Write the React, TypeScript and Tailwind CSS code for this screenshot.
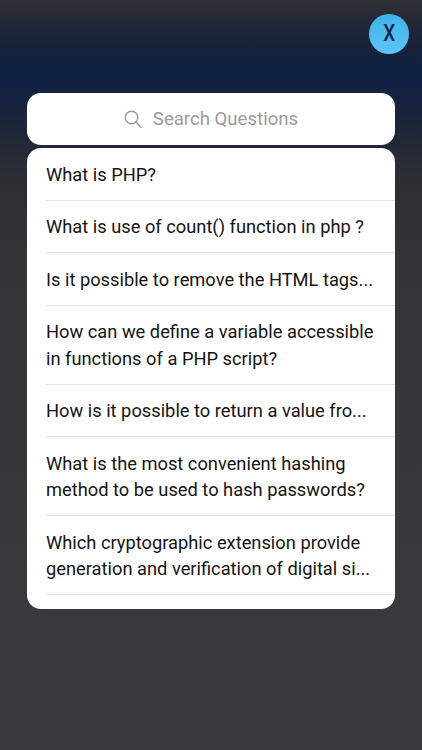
const rows = [
  { text: "What is PHP?" },
  { text: "What is use of count() function in php ?" },
  { text: "Is it possible to remove the HTML tags..." },
  { text: "How can we define a variable accessible\nin functions of a PHP script?" },
  { text: "How is it possible to return a value fro..." },
  { text: "What is the most convenient hashing\nmethod to be used to hash passwords?" },
  { text: "Which cryptographic extension provide\ngeneration and verification of digital si..." },
];

export default function App() {
  return (
    <div
      className="flex h-[750px] w-[422px] flex-col overflow-hidden bg-[linear-gradient(180deg,#2f3034_0px,#1b2438_35px,#0e2043_75px,#182439_115px,#2c2e33_175px,#333436_260px,#37383a_500px,#3a3b3f_750px)] font-['Roboto',sans-serif]"
    >
      <div className="flex justify-end pt-[14px] pr-[13px]">
        <div className="flex h-10 w-10 items-center justify-center rounded-full bg-[linear-gradient(180deg,#3fb4ea,#5cc4f6)] text-[#0f2a48]">
          <span className="scale-x-[0.82] text-[23px] font-medium">X</span>
        </div>
      </div>
      <div className="mt-[39px] flex flex-col gap-[3px] px-[27px]">
        <div className="flex h-[52px] items-center justify-center gap-[11px] rounded-[14px] bg-white">
          <svg width="18" height="18" viewBox="0 0 18 18" fill="none" stroke="#9a9a9a" strokeWidth="1.4" strokeLinecap="round">
            <circle cx="7.5" cy="7.5" r="6.3" />
            <path d="M12 12l5 5.2" />
          </svg>
          <span className="pt-px text-[18.6px] text-[#9b9b9b]">Search Questions</span>
        </div>
        <div className="flex h-[461px] flex-col rounded-[14px] bg-white pl-[19px]">
          {rows.map((row) => (
            <div
              key={row.text}
              className="whitespace-pre-line border-b border-[#e6e6e6] pt-[13.5px] pb-[11.5px] text-[18.3px] leading-[26.5px] text-[#141414]"
            >
              {row.text}
            </div>
          ))}
        </div>
      </div>
    </div>
  );
}
